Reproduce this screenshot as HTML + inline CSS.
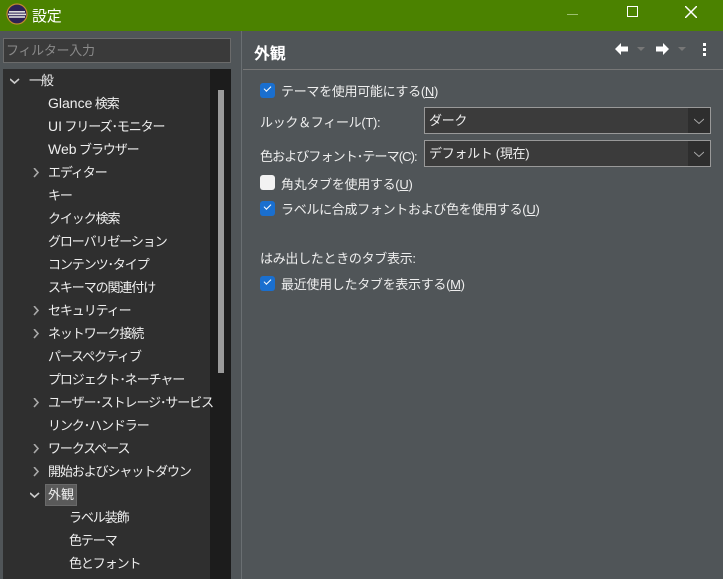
<!DOCTYPE html><html><head><meta charset="utf-8"><style>
*{margin:0;padding:0;box-sizing:border-box}
body{width:723px;height:579px;overflow:hidden;background:#505558;font-family:"Liberation Sans","Noto Sans CJK JP",sans-serif;font-size:13px;letter-spacing:-0.3px;color:#eee;position:relative}
.a{position:absolute;white-space:nowrap}
.title{left:0;top:0;width:723px;height:31px;background:#4b8200}
.tree{left:3px;top:69px;width:228px;height:510px;background:#2f2f2f}
.track{left:210px;top:69px;width:21px;height:510px;background:#1c1c1c}
.thumb{left:218px;top:90px;width:6px;height:283px;background:#9a9a9a}
.row{height:23px;line-height:23px;position:relative;letter-spacing:-1.1px}
.row .l{letter-spacing:0;font-size:14px}
.ch{position:absolute;top:7px}
.cb{width:15px;height:15px;border-radius:3px;background:#1a6fcf}
.cb::after{content:"";position:absolute;left:4px;top:3px;width:6px;height:3px;border-left:1.5px solid #fff;border-bottom:1.5px solid #fff;transform:rotate(-45deg)}
.cbw{width:15px;height:15px;border-radius:3px;background:#f2f2f2}
.combo{left:424px;width:287px;height:27px;border:1px solid #999;background:#3b3b3b;line-height:25px;padding-left:4px}
.combo .btn{position:absolute;right:0;top:0;width:22px;height:25px;background:#2e2e2e}
u{text-decoration:underline}
</style></head><body>
<div class="a title"></div>
<svg class="a" style="left:6px;top:3px" width="22" height="22" viewBox="0 0 22 22"><circle cx="11" cy="11" r="10" fill="#2c2255"/><circle cx="11" cy="11" r="10" fill="none" stroke="#c08a30" stroke-width="1.2"/><rect x="3" y="8" width="16" height="1.6" fill="#ddd"/><rect x="2" y="10.6" width="18" height="1.6" fill="#ddd"/><rect x="3" y="13.2" width="16" height="1.6" fill="#ddd"/></svg>
<div class="a" style="left:32px;top:5px;font-size:15px;color:#fff">設定</div>
<div class="a" style="left:567px;top:14px;width:11px;height:1px;background:#9cc070"></div>
<div class="a" style="left:627px;top:6px;width:11px;height:11px;border:1.5px solid #fff"></div>
<svg class="a" style="left:685px;top:6px" width="12" height="12"><path d="M0 0L12 12M12 0L0 12" stroke="#fff" stroke-width="1.5"/></svg>
<div class="a" style="left:3px;top:38px;width:228px;height:25px;border:1px solid #6b6b6b;background:#3a3a3a;color:#8a8a8a;padding-left:2px;line-height:23px">フィルター入力</div>
<div class="a tree"></div><div class="a track"></div><div class="a thumb"></div>
<div class="a" style="left:241px;top:31px;width:1px;height:548px;background:#6a6f72"></div>
<svg width="0" height="0" style="position:absolute"><defs>
<path id="r" d="M2 0L6 4.5L2 9" fill="none" stroke="#aaa" stroke-width="1.6"/>
<path id="d" d="M0 2L4.5 6L9 2" fill="none" stroke="#ccc" stroke-width="1.6"/></defs></svg>
<div class="a" style="left:9px;top:69px;width:200px">
<div class="row"><svg class="ch" style="left:1px;top:8px" width="10" height="8"><use href="#d"/></svg><span style="padding-left:20px">一般</span></div>
<div class="row" style="padding-left:39px"><span class="l">Glance</span> 検索</div>
<div class="row" style="padding-left:39px"><span class="l">UI</span> フリーズ･モニター</div>
<div class="row" style="padding-left:39px"><span class="l">Web</span> ブラウザー</div>
<div class="row" style="padding-left:39px"><svg class="ch" style="left:23px" width="8" height="10"><use href="#r"/></svg>エディター</div>
<div class="row" style="padding-left:39px">キー</div>
<div class="row" style="padding-left:39px">クイック検索</div>
<div class="row" style="padding-left:39px">グローバリゼーション</div>
<div class="row" style="padding-left:39px">コンテンツ･タイプ</div>
<div class="row" style="padding-left:39px">スキーマの関連付け</div>
<div class="row" style="padding-left:39px"><svg class="ch" style="left:23px" width="8" height="10"><use href="#r"/></svg>セキュリティー</div>
<div class="row" style="padding-left:39px"><svg class="ch" style="left:23px" width="8" height="10"><use href="#r"/></svg>ネットワーク接続</div>
<div class="row" style="padding-left:39px">パースペクティブ</div>
<div class="row" style="padding-left:39px">プロジェクト･ネーチャー</div>
<div class="row" style="padding-left:39px"><svg class="ch" style="left:23px" width="8" height="10"><use href="#r"/></svg>ユーザー･ストレージ･サービス</div>
<div class="row" style="padding-left:39px">リンク･ハンドラー</div>
<div class="row" style="padding-left:39px"><svg class="ch" style="left:23px" width="8" height="10"><use href="#r"/></svg>ワークスペース</div>
<div class="row" style="padding-left:39px"><svg class="ch" style="left:23px" width="8" height="10"><use href="#r"/></svg>開始およびシャットダウン</div>
<div class="row" style="padding-left:36px"><svg class="ch" style="left:21px;top:8px" width="10" height="8"><use href="#d"/></svg><span style="background:#5a5a5a;border:1px solid #6a6a6a;padding:0 2px;display:inline-block;line-height:20px;letter-spacing:0">外観</span></div>
<div class="row" style="padding-left:60px">ラベル装飾</div>
<div class="row" style="padding-left:60px">色テーマ</div>
<div class="row" style="padding-left:60px">色とフォント</div>
</div>
<div class="a" style="left:254px;top:40px;font-size:16px;font-weight:bold;color:#fff">外観</div>
<svg class="a" style="left:612px;top:41px" width="100" height="16">
<path d="M3 8L9 2V5.5H16V10.5H9V14Z" fill="#fff"/>
<path d="M25 6h8l-4 4z" fill="#777"/>
<path d="M57 8L51 2V5.5H44V10.5H51V14Z" fill="#fff"/>
<path d="M66 6h8l-4 4z" fill="#777"/>
<rect x="91" y="2" width="3" height="3" fill="#fff"/><rect x="91" y="7" width="3" height="3" fill="#fff"/><rect x="91" y="12" width="3" height="3" fill="#fff"/>
</svg>
<div class="a" style="left:243px;top:69px;width:480px;height:1px;background:#777"></div>
<div class="a cb" style="left:260px;top:83px"></div><div class="a" style="left:281px;top:81px">テーマを使用可能にする(<u>N</u>)</div>
<div class="a" style="left:260px;top:112px">ルック＆フィール(T):</div>
<div class="a combo" style="top:107px">ダーク<div class="btn"></div><svg class="a" style="right:6px;top:9px" width="10" height="8"><path d="M0 2L5 6.5L10 2" fill="none" stroke="#aaa"/></svg></div>
<div class="a" style="left:260px;top:146px;letter-spacing:-0.9px">色およびフォント･テーマ(C):</div>
<div class="a combo" style="top:140px">デフォルト (現在)<div class="btn"></div><svg class="a" style="right:6px;top:9px" width="10" height="8"><path d="M0 2L5 6.5L10 2" fill="none" stroke="#aaa"/></svg></div>
<div class="a cbw" style="left:260px;top:175px"></div><div class="a" style="left:281px;top:174px">角丸タブを使用する(<u>U</u>)</div>
<div class="a cb" style="left:260px;top:201px"></div><div class="a" style="left:281px;top:199px">ラベルに合成フォントおよび色を使用する(<u>U</u>)</div>
<div class="a" style="left:260px;top:248px">はみ出したときのタブ表示:</div>
<div class="a cb" style="left:260px;top:276px"></div><div class="a" style="left:281px;top:274px">最近使用したタブを表示する(<u>M</u>)</div>
</body></html>
